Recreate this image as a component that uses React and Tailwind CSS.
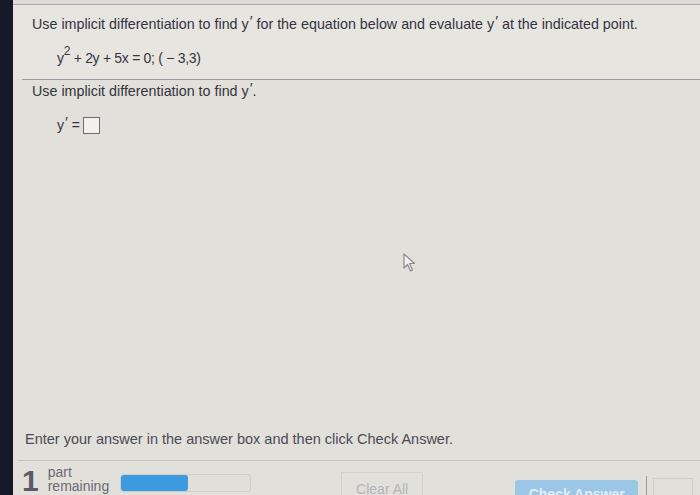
import React from 'react';

const font = { fontFamily: '"Liberation Sans", Arial, sans-serif' };

const Prime = () => <span className="relative -top-[3px] text-[15px] leading-none ml-[1px]">′</span>;

export default function App() {
  return (
    <div className="w-[700px] h-[495px] flex overflow-hidden bg-[#e2e0da]" style={font}>
      {/* dark bezel */}
      <div className="w-[13px] h-full bg-[#161a28]" />

      <div className="relative flex-1 flex flex-col">
        <div className="h-[5px] bg-[#dcdcdc] border-b border-[#a8a8b0]" />

        {/* question header */}
        <div className="bg-[#e6e5e0] pl-[19px] pt-[9px] pb-[10px]">
          <p className="text-[14.3px] text-[#33343f]">
            Use implicit differentiation to find y<Prime /> for the equation below and evaluate y<Prime /> at the indicated point.
          </p>
          <p className="mt-[13px] ml-[25px] text-[14px] text-[#33343f] tracking-[-0.3px]">
            y<sup className="text-[12px] -top-[8px]">2</sup> + 2y + 5x = 0; ( − 3,3)
          </p>
        </div>
        <div className="ml-[9px] border-t border-[#9c9ca4]" />

        {/* answer part */}
        <div className="pl-[19px] pt-[1px]">
          <p className="text-[14.3px] text-[#33343f]">
            Use implicit differentiation to find y<Prime />.
          </p>
          <div className="mt-[12px] ml-[25px] flex items-center text-[14px] text-[#33343f]">
            <span>y<Prime /> =</span>
            <span className="ml-[3px] w-[17px] h-[17px] border border-[#6d6d78] bg-[#f2f1ee]" />
          </div>
        </div>

        <div className="flex-1" />

        <p className="pl-[12px] text-[14.5px] text-[#4a4b55]">
          Enter your answer in the answer box and then click Check Answer.
        </p>
        <div className="mt-[9px] ml-[5px] border-t border-[#c4c3be]" />

        {/* footer */}
        <div className="h-[34px] flex items-start pt-[5px] pl-[9px]">
          <span className="text-[30px] leading-[30px] font-bold text-[#5a5b66]">1</span>
          <div className="ml-[9px] -mt-[1px] text-[14px] leading-[14px] text-[#6a6b74]">
            <div>part</div>
            <div>remaining</div>
          </div>
          <div className="ml-[11px] mt-[8px] w-[131px] h-[18px] rounded-[3px] border border-[#cfcec9] bg-[#e0dfda] flex">
            <div className="w-[67px] h-full rounded-[3px] bg-[#3d9ade]" />
          </div>
          <div className="ml-[90px] mt-[6px] w-[82px] h-[30px] border border-[#d3d2cd] text-center pt-[6px] text-[14px] text-[#b3b4ba]">
            Clear All
          </div>
          <div className="ml-[92px] mt-[14px] w-[123px] h-[30px] rounded-[3px] bg-[#9cc6e6] text-center pt-[4px] text-[14px] text-[#e4eef7] font-bold">
            Check Answer
          </div>
          <div className="ml-[8px] mt-[10px] w-[1px] h-[22px] bg-[#9a9aa0]" />
          <div className="ml-[6px] mt-[12px] w-[40px] h-[30px] border border-[#cfcec9]" />
        </div>

        {/* mouse cursor */}
        <svg className="absolute left-[390px] top-[253px]" width="14" height="20" viewBox="0 0 14 20">
          <path d="M1 1 L1 15 L4.5 11.5 L7.5 18 L9.5 17 L6.5 10.5 L11.5 10.5 Z" fill="#f1f0ec" stroke="#8a8a92" strokeWidth="1.2" strokeLinejoin="round" />
        </svg>
      </div>
    </div>
  );
}
